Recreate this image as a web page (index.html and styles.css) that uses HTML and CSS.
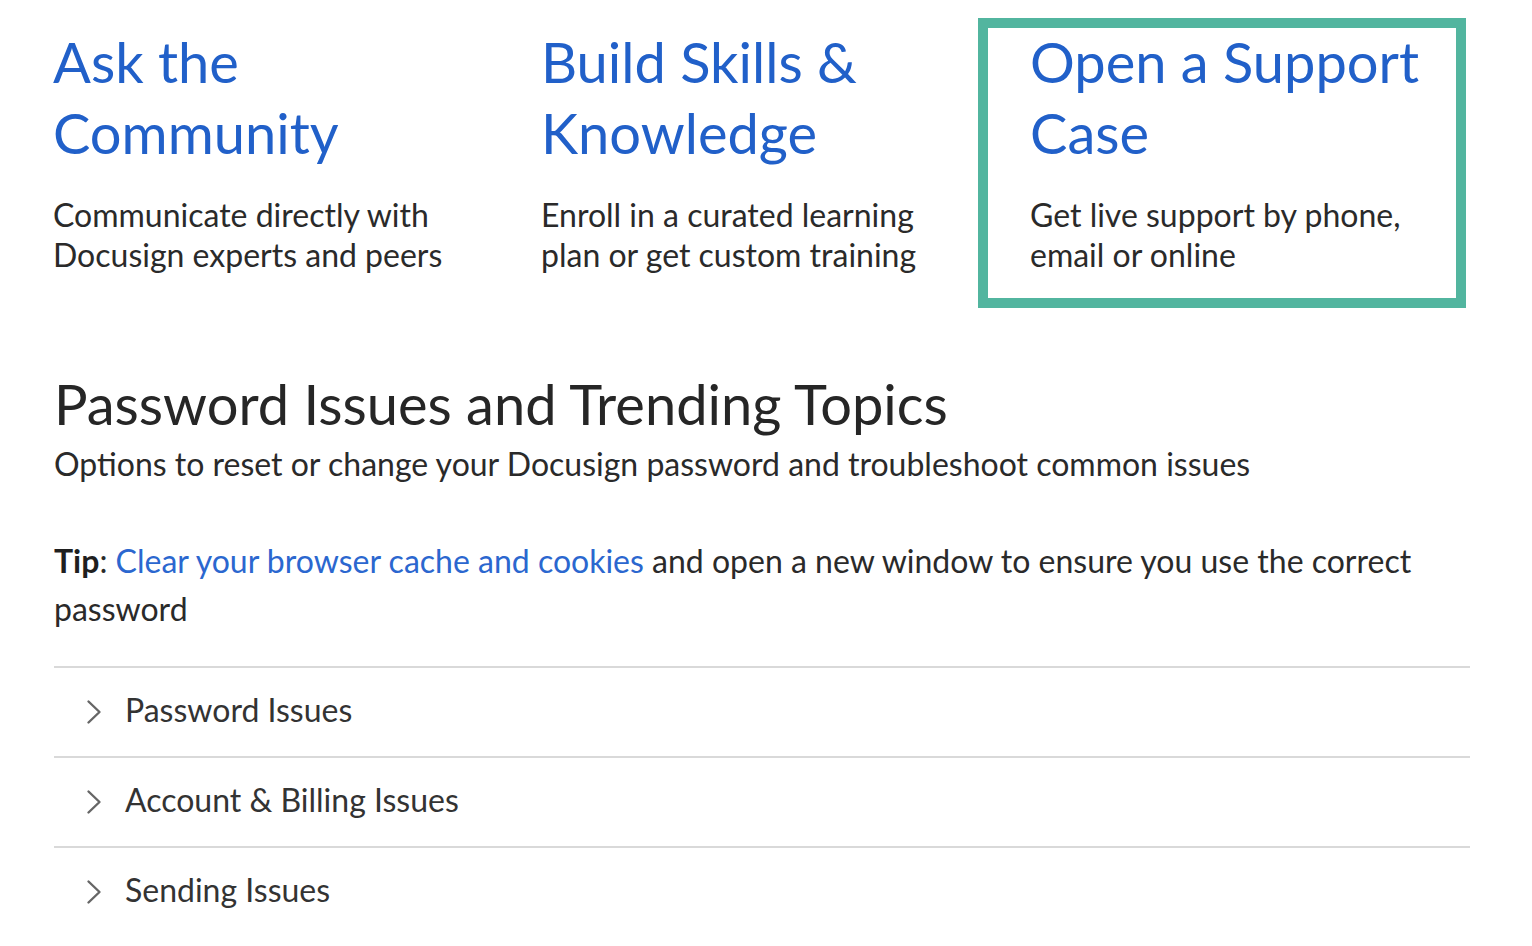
FILE: index.html
```html
<!DOCTYPE html>
<html lang="en">
<head>
<meta charset="utf-8">
<title>Docusign Support</title>
<link rel="stylesheet" href="styles.css">
</head>
<body>
<main class="page">
  <section class="cards">
    <a class="card" href="#">
      <h2 class="card-title">Ask the Community</h2>
      <p class="card-desc">Communicate directly with Docusign experts and peers</p>
    </a>
    <a class="card" href="#">
      <h2 class="card-title">Build Skills &amp; Knowledge</h2>
      <p class="card-desc">Enroll in a curated learning plan or get custom training</p>
    </a>
    <a class="card card-active" href="#">
      <h2 class="card-title">Open a Support Case</h2>
      <p class="card-desc">Get live support by phone, email or online</p>
    </a>
  </section>

  <section class="topics">
    <h1 class="topics-title">Password Issues and Trending Topics</h1>
    <p class="topics-sub">Options to reset or change your Docusign password and troubleshoot common issues</p>
    <p class="tip"><strong>Tip</strong>: <a class="tip-link" href="#">Clear your browser cache and cookies</a> and open a new window to ensure you use the correct password</p>

    <ul class="accordion">
      <li class="acc-item">
        <svg class="chev" width="16" height="26" viewBox="0 0 16 26"><polyline points="2.5,2.5 13.5,13 2.5,23.5" fill="none" stroke="#666" stroke-width="2.4" stroke-linecap="round" stroke-linejoin="round"/></svg>
        <span class="acc-label">Password Issues</span>
      </li>
      <li class="acc-item">
        <svg class="chev" width="16" height="26" viewBox="0 0 16 26"><polyline points="2.5,2.5 13.5,13 2.5,23.5" fill="none" stroke="#666" stroke-width="2.4" stroke-linecap="round" stroke-linejoin="round"/></svg>
        <span class="acc-label">Account &amp; Billing Issues</span>
      </li>
      <li class="acc-item">
        <svg class="chev" width="16" height="26" viewBox="0 0 16 26"><polyline points="2.5,2.5 13.5,13 2.5,23.5" fill="none" stroke="#666" stroke-width="2.4" stroke-linecap="round" stroke-linejoin="round"/></svg>
        <span class="acc-label">Sending Issues</span>
      </li>
    </ul>
  </section>
</main>
</body>
</html>
```
FILE: styles.css
```css
* { box-sizing: border-box; }

html, body {
  margin: 0;
  padding: 0;
  background: #ffffff;
}

body {
  font-family: Lato, "Open Sans", sans-serif;
  color: #262626;
  overflow: hidden;
}

.page {
  padding: 18px 0 0 1px;
}

.cards {
  display: grid;
  grid-template-columns: 488px 489px 488px;
}

.card {
  display: block;
  text-decoration: none;
  border: 10px solid transparent;
  padding: 0 0 23px 42px;
}

.card-active {
  border-color: #52b59f;
}

.card-title {
  margin: -2px 0 0;
  font-size: 56px;
  font-weight: 400;
  line-height: 71px;
  color: #2160c9;
}

.card-desc {
  margin: 27px 0 0;
  font-size: 32px;
  line-height: 40px;
  color: #2a2a2a;
}

.topics {
  margin: 62px 0 0 53px;
  width: 1416px;
}

.topics-title {
  margin: 0;
  font-size: 56px;
  font-weight: 400;
  line-height: 67px;
  color: #262626;
}

.topics-sub {
  margin: 7px 0 0;
  font-size: 32px;
  line-height: 40px;
  color: #2a2a2a;
}

.tip {
  margin: 53px 0 0;
  font-size: 32px;
  line-height: 48px;
  color: #2a2a2a;
}

.tip strong {
  font-weight: 700;
  color: #1f1f1f;
}

.tip-link {
  color: #2b67cf;
  text-decoration: none;
}

.accordion {
  list-style: none;
  margin: 33px 0 0;
  padding: 0;
}

.acc-item {
  display: flex;
  align-items: center;
  border-top: 2px solid #d9d9d9;
  padding: 22px 0 26px 32px;
}

.chev {
  flex: none;
  margin-top: 4px;
  margin-right: 23px;
}

.acc-label {
  font-size: 32px;
  line-height: 40px;
  color: #333333;
}
```
